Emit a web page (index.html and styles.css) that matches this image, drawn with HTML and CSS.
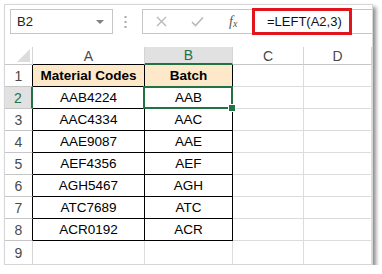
FILE: index.html
```html
<!DOCTYPE html>
<html lang="en">

<head>
    <meta charset="UTF-8">
    <title>LEFT formula</title>
    <link rel="stylesheet" href="styles.css">
</head>
<body>
    <div class="window">
        <div class="formula-bar">
            <div class="name-box">
                <span>B2</span>
                <span class="arrow"></span>
            </div>
            <svg class="dots" width="3" height="12" viewBox="0 0 3 12">
                <rect x="0.5" y="0" width="2" height="2" fill="#a8a8a8"/>
                <rect x="0.5" y="5" width="2" height="2" fill="#a8a8a8"/>
                <rect x="0.5" y="10" width="2" height="2" fill="#a8a8a8"/>
            </svg>
            <div class="formula-box">
                <svg class="fb-icon" width="11" height="11" viewBox="0 0 11 11">
                    <path d="M1 1 L10 10 M10 1 L1 10" stroke="#b8b8b8" stroke-width="1.4" fill="none"/>
                </svg>
                <svg class="fb-icon check" width="13" height="11" viewBox="0 0 13 11">
                    <path d="M1 6 L4.5 9.5 L12 1.5" stroke="#b8b8b8" stroke-width="1.6" fill="none"/>
                </svg>
                <span class="fx"><i>f</i><sub>x</sub></span>
                <span class="formula">=LEFT(A2,3)</span>
            </div>
        </div>

        <div class="sheet">
            <div class="hd corner"><span class="tri"></span></div>
            <div class="hd col tbl">A</div>
            <div class="hd col sel">B</div>
            <div class="hd col">C</div>
            <div class="hd col">D</div>

            <div class="hd row tbl">1</div>
            <div class="cell tbl title">Material Codes</div>
            <div class="cell tbl title">Batch</div>
            <div class="cell"></div>
            <div class="cell"></div>

            <div class="hd row sel">2</div>
            <div class="cell tbl">AAB4224</div>
            <div class="cell tbl active">AAB</div>
            <div class="cell"></div>
            <div class="cell"></div>

            <div class="hd row tbl">3</div>
            <div class="cell tbl">AAC4334</div>
            <div class="cell tbl">AAC</div>
            <div class="cell"></div>
            <div class="cell"></div>

            <div class="hd row tbl">4</div>
            <div class="cell tbl">AAE9087</div>
            <div class="cell tbl">AAE</div>
            <div class="cell"></div>
            <div class="cell"></div>

            <div class="hd row tbl">5</div>
            <div class="cell tbl">AEF4356</div>
            <div class="cell tbl">AEF</div>
            <div class="cell"></div>
            <div class="cell"></div>

            <div class="hd row tbl">6</div>
            <div class="cell tbl">AGH5467</div>
            <div class="cell tbl">AGH</div>
            <div class="cell"></div>
            <div class="cell"></div>

            <div class="hd row tbl">7</div>
            <div class="cell tbl">ATC7689</div>
            <div class="cell tbl">ATC</div>
            <div class="cell"></div>
            <div class="cell"></div>

            <div class="hd row tbl">8</div>
            <div class="cell tbl">ACR0192</div>
            <div class="cell tbl">ACR</div>
            <div class="cell"></div>
            <div class="cell"></div>

            <div class="hd row last">9</div>
            <div class="cell last"></div>
            <div class="cell last"></div>
            <div class="cell last"></div>
            <div class="cell last"></div>
        </div>
    </div>
</body>

</html>
```

FILE: styles.css
```css
* {
    box-sizing: border-box;
}

body {
    margin: 0;
    background: #fff;
    font-family: "Liberation Sans", Arial, sans-serif;
    color: #000;
}

.window {
    margin: 4px 0 0 4px;
    width: 369px;
    height: 261px;
    background: #fff;
    border: 1px solid #d6d6d6;
    box-shadow: 3px 3px 4px rgba(0, 0, 0, 0.45);
    overflow: hidden;
    display: flex;
    flex-direction: column;
}

/* formula bar */
.formula-bar {
    height: 42px;
    display: flex;
    align-items: flex-start;
    padding: 4px 0 0 5px;
}

.name-box {
    width: 103px;
    height: 25px;
    border: 1px solid #c6c6c6;
    display: flex;
    align-items: center;
    justify-content: space-between;
    padding: 0 8px 0 6px;
    font-size: 13px;
    color: #222;
}

.arrow {
    width: 0;
    height: 0;
    border-left: 4px solid transparent;
    border-right: 4px solid transparent;
    border-top: 4px solid #808080;
}

.dots {
    margin: 7px 0 0 11px;
}

.formula-box {
    flex: 1;
    height: 25px;
    margin-left: 15px;
    border: 1px solid #c6c6c6;
    border-right: none;
    display: flex;
    align-items: center;
    padding-left: 13px;
}

.fb-icon {
    margin-right: 24px;
}

.check {
    margin-right: 25px;
}

.fx {
    font-family: "Liberation Serif", serif;
    font-size: 14px;
    color: #555;
    width: 17px;
}

.fx sub {
    font-size: 10px;
    font-style: italic;
    vertical-align: -1px;
}

.formula {
    margin-left: 6px;
    height: 27px;
    width: 100px;
    border: 3px solid #e2141c;
    font-size: 13px;
    color: #111;
    display: flex;
    align-items: center;
    padding-left: 12px;
}

/* grid */
.sheet {
    flex: 1;
    display: grid;
    grid-template-columns: 28px 112px 88px 71px 1fr;
    grid-template-rows: 18px repeat(8, 22px) 1fr;
    font-size: 13.5px;
}

.hd {
    display: flex;
    align-items: center;
    justify-content: center;
    color: #4a4a4a;
    font-size: 14px;
    background: #fff;
    border-right: 1px solid #d4d4d4;
    border-bottom: 1px solid #c6c6c6;
}

.corner {
    align-items: flex-end;
    justify-content: flex-end;
    padding: 0 2px 2px 0;
}

.tri {
    width: 0;
    height: 0;
    border-left: 13px solid transparent;
    border-bottom: 13px solid #dcdcdc;
}

.col.tbl {
    border-bottom-color: #000;
}

.col.sel {
    background: #e1e1e1;
    color: #217346;
    border-bottom: 2px solid #217346;
}

.row.tbl {
    border-right-color: #000;
}

.row.sel {
    background: #e1e1e1;
    color: #217346;
    border-right: 2px solid #217346;
}

.row.last {
    border-bottom: none;
}

.cell {
    display: flex;
    align-items: center;
    justify-content: center;
    border-right: 1px solid #dadcdd;
    border-bottom: 1px solid #dadcdd;
}

.cell.tbl {
    border-right-color: #000;
    border-bottom-color: #000;
}

.cell.last {
    border-bottom: none;
}

.title {
    background: #fde9c9;
    font-weight: bold;
}

.active {
    position: relative;
}

.active::after {
    content: "";
    position: absolute;
    top: -1px;
    left: -2px;
    right: -1px;
    bottom: -1px;
    border: 2px solid #217346;
}

.active::before {
    content: "";
    position: absolute;
    right: -4px;
    bottom: -4px;
    width: 6px;
    height: 6px;
    background: #217346;
    border: 1px solid #fff;
    z-index: 1;
}
```
